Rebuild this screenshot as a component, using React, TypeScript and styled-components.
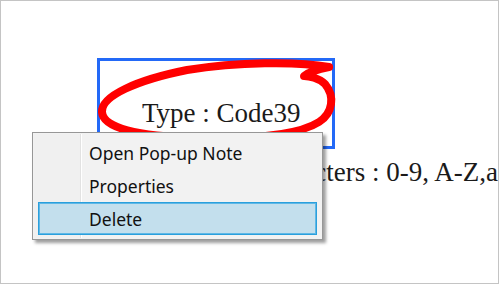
import React from "react";
import styled, { createGlobalStyle } from "styled-components";

const Global = createGlobalStyle`
  html, body { margin: 0; padding: 0; background: #ffffff; }
  body { font-family: "Liberation Serif", "Times New Roman", serif; }
`;

const Frame = styled.div`
  position: relative;
  width: 499px;
  height: 284px;
  box-sizing: border-box;
  border: 1px solid #c4c4c4;
  background: #ffffff;
  overflow: hidden;
`;

const Page = styled.div`
  display: flex;
  flex-direction: column;
  padding: 57px 0 0 96px;
`;

const AnnotBox = styled.div`
  position: relative;
  box-sizing: border-box;
  width: 238px;
  height: 91px;
  border: 3px solid #2369f7;
  display: flex;
  align-items: flex-end;
  padding: 0 0 18px 42px;
`;

const DocText = styled.div<{ $indent?: number }>`
  font-family: "Liberation Serif", "Times New Roman", serif;
  font-size: 27px;
  line-height: 30px;
  color: #1a1a1a;
  white-space: nowrap;
  margin-left: ${(p) => p.$indent ?? 0}px;
`;

const SecondLine = styled(DocText)`
  margin-top: 8px;
`;

const Ink = styled.svg`
  position: absolute;
  left: -3px;
  top: -3px;
  width: 238px;
  height: 91px;
  overflow: visible;
  pointer-events: none;
`;

const Menu = styled.div`
  position: absolute;
  left: 31px;
  top: 131px;
  width: 291px;
  height: 108px;
  box-sizing: border-box;
  border: 1px solid #979797;
  background: #f2f2f2;
  box-shadow: 3px 3px 3px rgba(0, 0, 0, 0.38);
  padding: 4px 5px 4px 5px;
  display: flex;
  flex-direction: column;
  font-family: "Noto Sans", "Open Sans", sans-serif;
`;

const Gutter = styled.div`
  position: absolute;
  left: 1px;
  top: 1px;
  bottom: 1px;
  width: 46px;
  border-right: 1px solid #e2e2e2;
  box-shadow: 1px 0 0 #ffffff;
  background: #f0f0f0;
`;

const Item = styled.div<{ $active?: boolean }>`
  position: relative;
  box-sizing: border-box;
  height: 33px;
  display: flex;
  align-items: center;
  padding-left: 50px;
  font-size: 17.5px;
  color: #111111;
  border: 1px solid ${(p) => (p.$active ? "#2a9fdc" : "transparent")};
  background: ${(p) => (p.$active ? "#c3dfed" : "transparent")};
  box-shadow: ${(p) => (p.$active ? "inset 0 0 0 1px #5fb8e6" : "none")};
`;

export default function App() {
  return (
    <>
      <Global />
      <Frame>
        <Page>
          <AnnotBox>
            <DocText>Type : Code39</DocText>
            <Ink viewBox="0 0 238 91">
              <path
                d="M 232 9 C 200 3, 140 4, 90 12 C 40 22, 4 38, 5 54 C 6 70, 40 78, 100 80 C 150 81, 200 78, 222 64 C 236 55, 238 38, 228 26 C 222 20, 212 18, 207 18 C 212 14, 222 11, 232 9"
                fill="none"
                stroke="#ff0000"
                strokeWidth="8"
                strokeLinecap="round"
                strokeLinejoin="round"
              />
            </Ink>
          </AnnotBox>
          <SecondLine $indent={95}>Valid characters : 0-9, A-Z,a-z</SecondLine>
        </Page>
        <Menu>
          <Gutter />
          <Item>Open Pop-up Note</Item>
          <Item>Properties</Item>
          <Item $active>Delete</Item>
        </Menu>
      </Frame>
    </>
  );
}
